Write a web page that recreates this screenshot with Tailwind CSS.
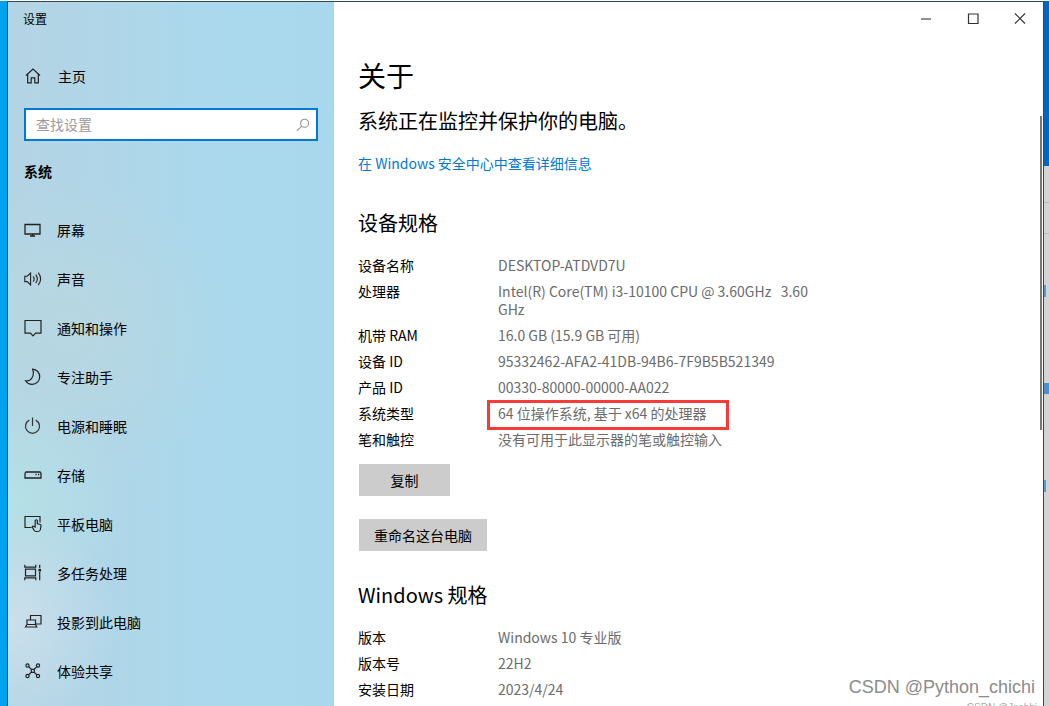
<!DOCTYPE html>
<html lang="zh-CN">
<head>
<meta charset="utf-8">
<title>设置</title>
<script src="https://cdn.jsdelivr.net/npm/@tailwindcss/browser@4"></script>
</head>
<body class="h-screen overflow-hidden bg-white font-['Noto_Sans_CJK_SC',sans-serif] text-sm text-black">
<div class="relative flex h-full">
    <!-- Desktop edge -->
    <div class="mt-px w-[7px] shrink-0 bg-[#00a2ed]"></div>

    <!-- Settings window -->
    <div class="mt-px flex min-w-0 flex-1 border-x border-t border-[#2c4a50]">
        <aside class="w-[326px] shrink-0 bg-[radial-gradient(circle_at_0px_620px,#cbe0ec_0,#cbe0ec00_110px),radial-gradient(circle_at_0px_500px,#b5e1e6_0,#b5e1e600_120px),radial-gradient(circle_at_60px_330px,#b7d7e1_0,#b7d7e100_160px),linear-gradient(to_right,#b4d4e4,#abd8ec_60%,#a9d8ec)] pl-4">
            <div class="flex h-[34px] items-center text-xs"><span class="-ml-px">设置</span></div>
            <a href="#" class="mt-[22px] flex h-9 items-center">
                <svg class="mr-4 size-[18px]" viewBox="0 0 18 18" fill="none" stroke="#222" stroke-width="1.2"><path d="M2 8.500 9 2l7 6.500M3.700 7.500v8.300h3.500v-5h3.600v5h3.500V7.500"/></svg>
                主页
            </a>
            <div class="relative mr-4 mt-3.5">
                <input type="text" aria-label="查找设置" placeholder="查找设置" class="block h-[33px] w-full border-2 border-[#0078d7] bg-white pb-0.5 pl-2.5 pr-9 outline-none placeholder:text-[#9a9a9a]">
                <svg class="absolute right-2 top-2.5 size-3.5" viewBox="0 0 16 16" fill="none" stroke="#909090" stroke-width="1.2"><circle cx="9.8" cy="6" r="4.6"/><path d="M6.500 9.300 1 14.800"/></svg>
            </div>
            <h2 class="mt-[18px] h-6 font-bold leading-6">系统</h2>
            <nav class="mt-[22px]">
                <a href="#" class="flex h-[49px] items-center gap-[15px]">
                    <svg class="size-[18px]" viewBox="0 0 18 18" fill="none" stroke="#222" stroke-width="1.3"><path d="M1 3.500h15v9.500H1zM6 15h5M8.500 12.700V15"/></svg>
                    屏幕
                </a>
                <a href="#" class="flex h-[49px] items-center gap-[15px]">
                    <svg class="size-[18px]" viewBox="0 0 18 18" fill="none" stroke="#222" stroke-width="1.1"><path d="M.8 6.2h2.400L6.600 3v12L3.200 11.600H.8zM9.200 6.400q2 2.600 0 5.200M11.700 4.600q3.300 4.300 0 8.600M14.200 2.600q4.800 6.300 0 12.600"/></svg>
                    声音
                </a>
                <a href="#" class="flex h-[49px] items-center gap-[15px]">
                    <svg class="size-[18px]" viewBox="0 0 18 18" fill="none" stroke="#222" stroke-width="1.2"><path d="M1 1.500h16v12.700h-5.400L9 16.800l-2.600-2.600H1z"/></svg>
                    通知和操作
                </a>
                <a href="#" class="flex h-[49px] items-center gap-[15px]">
                    <svg class="size-[18px]" viewBox="0 0 18 18" fill="none" stroke="#222" stroke-width="1.2"><path d="M8.700 1.200c4 .3 7 3.400 7 7.500 0 4.400-3.400 7.700-7.500 7.700-2.800 0-5.200-1.400-6.600-3.600 5 .9 9.400-4.600 7.100-11.600z"/></svg>
                    专注助手
                </a>
                <a href="#" class="flex h-[49px] items-center gap-[15px]">
                    <svg class="size-[18px]" viewBox="0 0 18 18" fill="none" stroke="#333" stroke-width="1.2"><path d="M8.500.5v8.500M5.300 3.100a7 7 0 1 0 6.400 0"/></svg>
                    电源和睡眠
                </a>
                <a href="#" class="flex h-[49px] items-center gap-[15px]">
                    <svg class="size-[18px]" viewBox="0 0 18 18" fill="none" stroke="#222" stroke-width="1.3"><path d="M1 12V7.500L2 6h14l1 1.500V12zM11.500 8.500h1.200M14 8.500h1.200"/></svg>
                    存储
                </a>
                <a href="#" class="flex h-[49px] items-center gap-[15px]">
                    <svg class="size-[18px]" viewBox="0 0 18 18" fill="none" stroke="#222" stroke-width="1.2"><path d="M7.500 12.500H1V1.500h15v6M11.200 12V5.500q1.100-1.500 2.200 0v3.300l3 .7q.8.300.6 1.300l-.6 3.700q-.4 2-2.400 2h-2q-1.200 0-1.900-1.200l-1.700-3q-.2-1.500 1.200-1z"/></svg>
                    平板电脑
                </a>
                <a href="#" class="flex h-[49px] items-center gap-[15px]">
                    <svg class="size-[18px]" viewBox="0 0 18 18" fill="none" stroke="#222" stroke-width="1.2"><path d="M.8.8v2.400h11V.8M1.500 5.200h10v6.600h-10zM.8 16.200v-2.400h11v2.400M15.700.8v3.500M15.700 8v8.200"/><path fill="#222" d="M15 5.500h1.500v1.500H15z"/></svg>
                    多任务处理
                </a>
                <a href="#" class="flex h-[49px] items-center gap-[15px]">
                    <svg class="size-[18px]" viewBox="0 0 18 18" fill="none" stroke="#222" stroke-width="1.2"><path d="M6.500 6.500V2.500H17v8.500h-5.500M3 7h8.500v4.500H3zM3 11.500l-1.500 2.500h11.300l-1.300-2.500"/></svg>
                    投影到此电脑
                </a>
                <a href="#" class="flex h-[49px] items-center gap-[15px]">
                    <svg class="size-[18px]" viewBox="0 0 18 18" fill="none" stroke="#222" stroke-width="1.2"><circle cx="3.500" cy="3.500" r="1.600"/><circle cx="14" cy="3.500" r="1.600"/><circle cx="3.500" cy="14" r="1.600"/><circle cx="14" cy="14" r="1.600"/><path d="m4.700 4.700 2.800 2.800M12.800 4.700 10 7.500M4.700 12.800 7.500 10M12.800 12.800 10 10M7.300 7.300h3v3h-3z"/></svg>
                    体验共享
                </a>
            </nav>
        </aside>

        <main class="relative min-w-0 flex-1 pl-6">
            <div class="flex h-[34px] justify-end">
                <button type="button" aria-label="最小化" class="grid w-[47px] place-items-center"><svg class="size-3" viewBox="0 0 12 12" fill="none" stroke="#333" stroke-width="1.1"><path d="M1 6h10"/></svg></button>
                <button type="button" aria-label="最大化" class="grid w-[47px] place-items-center"><svg class="size-3" viewBox="0 0 12 12" fill="none" stroke="#333" stroke-width="1.2"><path d="M1.500 1h9.500v9.500H1.500z"/></svg></button>
                <button type="button" aria-label="关闭" class="grid w-[47px] place-items-center"><svg class="size-3" viewBox="0 0 12 12" fill="none" stroke="#333" stroke-width="1.2"><path d="m1 .5 10 10M11 .5 1 10.500"/></svg></button>
            </div>
            <h1 class="mt-[19px] text-[28px] leading-10">关于</h1>
            <p class="mt-3 text-xl leading-7">系统正在监控并保护你的电脑。</p>
            <a href="#" class="mt-4 block w-fit leading-6 text-[#0078d7]">在 Windows 安全中心中查看详细信息</a>

            <h2 class="mt-[34px] text-xl leading-7">设备规格</h2>
            <dl class="mt-[19px] grid grid-cols-[140px_minmax(0,310px)] gap-y-2 leading-[18px]">
                <dt>设备名称</dt><dd class="text-[#6b6b6b]">DESKTOP-ATDVD7U</dd>
                <dt>处理器</dt><dd class="whitespace-pre-wrap text-[#6b6b6b]">Intel(R) Core(TM) i3-10100 CPU @ 3.60GHz   3.60 GHz</dd>
                <dt>机带 RAM</dt><dd class="text-[#6b6b6b]">16.0 GB (15.9 GB 可用)</dd>
                <dt>设备 ID</dt><dd class="text-[#6b6b6b]">95332462-AFA2-41DB-94B6-7F9B5B521349</dd>
                <dt>产品 ID</dt><dd class="text-[#6b6b6b]">00330-80000-00000-AA022</dd>
                <dt>系统类型</dt>
                <dd class="relative w-fit text-[#6b6b6b]">64 位操作系统, 基于 x64 的处理器<span class="absolute -bottom-2 -left-[11px] -right-[22px] -top-1 border-3 border-[#f83a3a]"></span></dd>
                <dt>笔和触控</dt><dd class="text-[#6b6b6b]">没有可用于此显示器的笔或触控输入</dd>
            </dl>
            <button type="button" class="ml-px mt-4 block h-8 w-[91px] bg-[#ccc] pb-px">复制</button>
            <button type="button" class="ml-px mt-[23px] block h-8 w-32 bg-[#ccc] pb-px">重命名这台电脑</button>

            <h2 class="mt-[30px] text-xl leading-7">Windows 规格</h2>
            <dl class="mt-[19px] grid grid-cols-[140px_minmax(0,310px)] gap-y-2 leading-[18px]">
                <dt>版本</dt><dd class="text-[#6b6b6b]">Windows 10 专业版</dd>
                <dt>版本号</dt><dd class="text-[#6b6b6b]">22H2</dd>
                <dt>安装日期</dt><dd class="text-[#6b6b6b]">2023/4/24</dd>
            </dl>

            <div class="absolute right-px top-[114px] h-[314px] w-0.5 bg-[#777]"></div>
        </main>
    </div>

    <!-- Window behind, right edge -->
    <div class="mt-px flex w-[5px] shrink-0 flex-col overflow-hidden bg-[#d4d4d4]">
        <div class="h-[165px] shrink-0 bg-[#0067c0]"></div>
        <div class="h-[37px] shrink-0 border-b border-[#bbb]"></div>
        <div class="h-[31px] shrink-0 border-b border-[#bbb]"></div>
        <div class="mt-[51px] h-3 w-0.5 shrink-0 bg-[#5b9bd5]"></div>
        <div class="mt-[86px] h-[11px] shrink-0 bg-[#4a90d0]"></div>
        <div class="mt-[86px] h-3 w-0.5 shrink-0 bg-[#5b9bd5]"></div>
    </div>

    <!-- Watermarks -->
    <div class="absolute bottom-[7px] right-3.5 font-['Liberation_Sans',sans-serif] text-lg leading-6 text-[#8c8c8c]">CSDN @Python_chichi</div>
    <div class="absolute -bottom-2 right-3 font-['Liberation_Sans',sans-serif] text-[10px] leading-3 text-[#aaa]">CSDN @Jsehhi</div>
</div>
</body>
</html>
